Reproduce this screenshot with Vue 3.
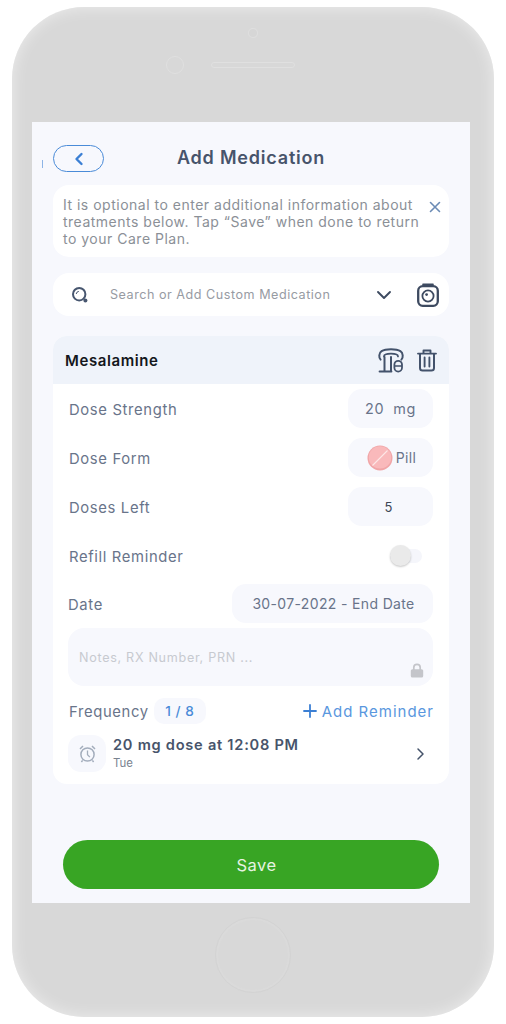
<template>
  <div class="page">
    <div class="phone">
      <div class="bezel-top">
        <span class="sensor"></span>
        <div class="ear-row">
          <span class="camera"></span>
          <span class="speaker"></span>
        </div>
      </div>

      <main class="screen">
        <span class="edge-mark"></span>
        <header class="nav">
          <button class="back" type="button">
            <svg width="12" height="14" viewBox="0 0 12 14"><path d="M8.5 2 3.5 7l5 5" fill="none" stroke="#3b7fd4" stroke-width="2.4" stroke-linecap="round" stroke-linejoin="round" /></svg>
          </button>
          <h1>Add Medication</h1>
        </header>

        <section class="info card">
          <p>It is optional to enter additional information about treatments below. Tap “Save” when done to return to your Care Plan.</p>
          <svg class="close" width="12" height="12" viewBox="0 0 12 12"><path d="M1.5 1.5l9 9M10.5 1.5l-9 9" stroke="#6b8bb5" stroke-width="1.6" stroke-linecap="round" /></svg>
        </section>

        <section class="search card">
          <svg class="search-icon" width="18" height="18" viewBox="0 0 18 18">
            <circle cx="8.2" cy="8.2" r="6.2" fill="none" stroke="#47566f" stroke-width="2" />
            <path d="M5.2 8a3 3 0 0 1 2.6-2.6" fill="none" stroke="#47566f" stroke-width="1" />
            <circle cx="14.4" cy="14.4" r="2" fill="#47566f" />
          </svg>
          <span class="search-text">Search or Add Custom Medication</span>
          <svg class="chev-down" width="16" height="10" viewBox="0 0 16 10"><path d="M2 2l6 6 6-6" fill="none" stroke="#3d4a60" stroke-width="1.9" stroke-linecap="round" stroke-linejoin="round" /></svg>
          <svg width="22" height="24" viewBox="0 0 22 24">
            <rect x="1.2" y="3.2" width="19.6" height="19.6" rx="4.5" fill="none" stroke="#3d4a60" stroke-width="2.3" />
            <path d="M6 1.4h10" stroke="#3d4a60" stroke-width="1.6" stroke-linecap="round" />
            <circle cx="11" cy="13" r="5.6" fill="none" stroke="#3d4a60" stroke-width="1.8" />
            <circle cx="9.6" cy="11.6" r="1.4" fill="#3d4a60" />
          </svg>
        </section>

        <section class="med card">
          <div class="med-head">
            <strong>Mesalamine</strong>
            <svg width="26" height="25" viewBox="0 0 26 25">
              <path d="M2.6 11.6C.6 9.6.8 5 3.6 3.2 6 1.6 9 1.2 13 1.2s7 .4 9.4 2c2.8 1.8 3 6.4 1 8.4" fill="none" stroke="#43526b" stroke-width="2" stroke-linecap="round" />
              <path d="M6 8.4c0-2 2.4-2.8 7-2.8s7 .8 7 2.8" fill="none" stroke="#43526b" stroke-width="1.8" stroke-linecap="round" />
              <path d="M6.5 9v14M13 9v14M1.6 23.4h11.8" fill="none" stroke="#43526b" stroke-width="2" stroke-linecap="round" />
              <rect x="16.4" y="12.8" width="7.6" height="10.8" rx="3.8" fill="none" stroke="#43526b" stroke-width="1.8" />
              <path d="M16.4 18h7.6" stroke="#43526b" stroke-width="1.6" />
            </svg>
            <svg class="trash" width="20" height="23" viewBox="0 0 20 23">
              <path d="M1 4.6h18M6.5 4V1.5h7V4" fill="none" stroke="#43526b" stroke-width="1.9" stroke-linecap="round" stroke-linejoin="round" />
              <path d="M3 5v14a2.6 2.6 0 0 0 2.6 2.6h8.8A2.6 2.6 0 0 0 17 19V5" fill="none" stroke="#43526b" stroke-width="2" />
              <path d="M7.6 8.5v9M12.4 8.5v9" stroke="#43526b" stroke-width="1.9" stroke-linecap="round" />
            </svg>
          </div>

          <div class="med-body">
            <div class="row">
              <span class="label">Dose Strength</span>
              <span class="pill-box strength">20&nbsp; mg</span>
            </div>
            <div class="row">
              <span class="label">Dose Form</span>
              <span class="pill-box form">
                <svg width="26" height="26" viewBox="0 0 26 26">
                  <circle cx="13" cy="13" r="12.5" fill="#f0a5a7" />
                  <circle cx="13" cy="12.4" r="11.2" fill="#f9b9bb" />
                  <path d="M5.5 20.5 20.5 5.5" stroke="#fde6e6" stroke-width="1.1" />
                </svg>
                Pill
              </span>
            </div>
            <div class="row">
              <span class="label">Doses Left</span>
              <span class="pill-box dark">5</span>
            </div>
            <div class="row refill">
              <span class="label">Refill Reminder</span>
              <span class="toggle"><span class="knob"></span></span>
            </div>
            <div class="row date-row">
              <span class="label">Date</span>
              <span class="pill-box date">30-07-2022 - End Date</span>
            </div>

            <div class="notes">
              <span>Notes, RX Number, PRN ...</span>
              <svg class="lock" width="14" height="15" viewBox="0 0 14 15">
                <path d="M3.8 7V4.6a3.2 3.2 0 0 1 6.4 0V7" fill="none" stroke="#c4c5ca" stroke-width="1.7" />
                <rect x="0.8" y="6.2" width="12.4" height="8.4" rx="1.6" fill="#c4c5ca" />
              </svg>
            </div>

            <div class="freq">
              <span class="label">Frequency</span>
              <span class="badge">1 / 8</span>
              <span class="add">
                <svg width="14" height="14" viewBox="0 0 14 14"><path d="M7 1v12M1 7h12" stroke="#3b7fd4" stroke-width="1.8" stroke-linecap="round" /></svg>
                Add Reminder
              </span>
            </div>

            <div class="reminder">
              <span class="alarm">
                <svg width="17" height="18" viewBox="0 0 17 18">
                  <circle cx="8.5" cy="9.5" r="6.6" fill="none" stroke="#a3adbc" stroke-width="1.5" />
                  <path d="M8.5 5.5v4.2l2.4 2.4" fill="none" stroke="#a3adbc" stroke-width="1.3" />
                  <path d="M1 4l3-3M16 4l-3-3M3.6 15.4 2.4 17M13.4 15.4l1.2 1.6" stroke="#a3adbc" stroke-width="1.5" />
                </svg>
              </span>
              <div class="reminder-text">
                <b>20 mg dose at 12:08 PM</b>
                <small>Tue</small>
              </div>
              <svg width="10" height="14" viewBox="0 0 10 14"><path d="M2 2l5 5-5 5" fill="none" stroke="#45536a" stroke-width="1.5" stroke-linecap="round" stroke-linejoin="round" /></svg>
            </div>
          </div>
        </section>

        <button class="save" type="button">Save</button>
      </main>

      <div class="bezel-bottom">
        <span class="home"></span>
      </div>
    </div>
  </div>
</template>

<script setup>
</script>

<style>
html,
body {
  background: #ffffff;
}
</style>

<style scoped>
.page {
  width: 506px;
  height: 1024px;
  padding: 7px 12px;
  box-sizing: border-box;
  font-family: Inter, "Noto Sans", sans-serif;
  overflow: hidden;
}

.phone {
  width: 482px;
  height: 1010px;
  border-radius: 72px;
  background: #d8d8d8;
  box-shadow: inset 0 0 16px rgba(255, 255, 255, 0.55);
  display: flex;
  flex-direction: column;
}

.bezel-top {
  height: 115px;
  width: 100%;
  flex: none;
  display: flex;
  flex-direction: column;
  align-items: center;
}

.sensor {
  width: 8px;
  height: 8px;
  margin-top: 22px;
  border-radius: 50%;
  background: #d6d6d6;
  box-shadow: 0 0 0 1px #dfdfdf;
}

.ear-row {
  display: flex;
  align-items: center;
  gap: 27px;
  margin-top: 19px;
  margin-left: -46px;
}

.camera {
  width: 18px;
  height: 18px;
  box-sizing: border-box;
  border-radius: 50%;
  border: 1px solid #e0e0e0;
  background: #d8d8d8;
}

.speaker {
  width: 84px;
  height: 6px;
  border-radius: 3px;
  background: #d8d8d8;
  border: 1px solid #e0e0e0;
  box-sizing: border-box;
}

.screen {
  position: relative;
  width: 438px;
  height: 781px;
  margin-left: 20px;
  flex: none;
  box-sizing: border-box;
  background: #f7f8fd;
  padding: 23px 21px 0;
  display: flex;
  flex-direction: column;
}

.edge-mark {
  position: absolute;
  left: 10px;
  top: 38px;
  width: 1px;
  height: 8px;
  background: #8db4e6;
}

.nav {
  position: relative;
  height: 27px;
  display: flex;
  align-items: center;
  justify-content: center;
}

.nav h1 {
  margin: -2px 0 0 0;
  font-size: 18px;
  font-weight: 600;
  color: #47546b;
  letter-spacing: 0.8px;
}

.back {
  position: absolute;
  left: 0;
  top: 0;
  width: 51px;
  height: 27px;
  padding: 0;
  box-sizing: border-box;
  border: 1.5px solid #4a8bd8;
  border-radius: 14px;
  background: transparent;
  display: flex;
  align-items: center;
  justify-content: center;
}

.card {
  background: #ffffff;
  border-radius: 16px;
}

.info {
  margin-top: 13px;
  height: 72px;
  box-sizing: border-box;
  padding: 11px 8px 0 10px;
  display: flex;
  justify-content: space-between;
  align-items: flex-start;
}

.info p {
  margin: 0;
  width: 362px;
  font-size: 14px;
  line-height: 17px;
  color: #8b9097;
  letter-spacing: 0.5px;
}

.close {
  margin-top: 5px;
}

.search {
  margin-top: 16px;
  height: 43px;
  display: flex;
  align-items: center;
  padding: 0 10px 0 18px;
}

.search-text {
  margin-left: 21px;
  font-size: 12.6px;
  color: #979ba3;
  letter-spacing: 0.52px;
  flex: 1;
}

.chev-down {
  margin-right: 25px;
}

.med {
  margin-top: 20px;
  height: 448px;
  overflow: hidden;
  border-radius: 14px;
}

.med-head {
  height: 48px;
  background: #eff3fa;
  display: flex;
  align-items: center;
  padding: 0 12px;
}

.med-head strong {
  flex: 1;
  font-size: 15px;
  font-weight: 600;
  color: #14171c;
  letter-spacing: 0.6px;
}

.trash {
  margin-left: 13px;
}

.med-body {
  padding: 5px 16px 0 15px;
  display: flex;
  flex-direction: column;
}

.row {
  height: 39px;
  margin-bottom: 10px;
  display: flex;
  align-items: center;
  justify-content: space-between;
  padding-left: 1px;
}

.label {
  padding-top: 2px;
  font-size: 14.8px;
  color: #69748a;
  letter-spacing: 0.65px;
}

.pill-box {
  width: 85px;
  height: 39px;
  border-radius: 14px;
  background: #f7f8fd;
  display: flex;
  align-items: center;
  justify-content: center;
  font-size: 14px;
  color: #69748a;
  letter-spacing: 0.3px;
}

.pill-box.strength {
  font-size: 14.4px;
  letter-spacing: 0.6px;
}

.pill-box.form {
  gap: 3px;
  padding-left: 2px;
  box-sizing: border-box;
}

.pill-box.dark {
  padding-right: 4px;
  box-sizing: border-box;
  color: #3d4656;
  font-size: 13px;
}

.pill-box.date {
  width: 201px;
  padding-left: 2px;
  box-sizing: border-box;
  letter-spacing: 0.35px;
}

.refill {
  margin-bottom: 9px;
  padding-left: 1px;
}

.toggle {
  width: 32px;
  height: 14px;
  margin-right: 11px;
  border-radius: 7px;
  background: #f5f6fb;
  display: flex;
  align-items: center;
}

.knob {
  width: 21px;
  height: 21px;
  border-radius: 50%;
  background: #eaeaea;
  box-shadow: 0 1px 2px rgba(0, 0, 0, 0.22);
}

.date-row {
  margin-bottom: 5px;
  padding-left: 0;
}

.notes {
  height: 58px;
  box-sizing: border-box;
  margin-left: 0;
  padding: 22px 9px 0 11px;
  border-radius: 16px;
  background: #f7f8fd;
  display: flex;
  justify-content: space-between;
  font-size: 12.6px;
  color: #c7cad0;
  letter-spacing: 0.7px;
}

.lock {
  margin-top: 13px;
}

.freq {
  margin-top: 12px;
  height: 26px;
  display: flex;
  align-items: center;
  padding-left: 1px;
}

.freq .label {
  padding-top: 1px;
}

.badge {
  width: 52px;
  height: 26px;
  margin-left: 5px;
  border-radius: 10px;
  background: #f7f8fd;
  display: flex;
  align-items: center;
  justify-content: center;
  font-size: 13.6px;
  font-weight: 500;
  color: #4a8bd8;
  letter-spacing: 0.5px;
}

.add {
  margin-left: auto;
  margin-right: -1px;
  display: flex;
  align-items: center;
  gap: 5px;
  font-size: 15px;
  color: #5a97de;
  letter-spacing: 1px;
}

.reminder {
  margin-top: 11px;
  display: flex;
  align-items: center;
  padding-right: 7px;
}

.alarm {
  width: 38px;
  height: 37px;
  flex: none;
  border-radius: 13px;
  background: #f7f8fd;
  display: flex;
  align-items: center;
  justify-content: center;
}

.reminder-text {
  flex: 1;
  margin-left: 7px;
  display: flex;
  flex-direction: column;
}

.reminder-text b {
  font-size: 14.6px;
  line-height: 19px;
  font-weight: 600;
  color: #47546b;
  letter-spacing: 0.75px;
}

.reminder-text small {
  font-size: 11.4px;
  line-height: 17px;
  color: #79828f;
}

.save {
  width: 376px;
  height: 49px;
  margin: 56px 0 0 10px;
  padding: 0 0 0 11px;
  border: 0;
  border-radius: 25px;
  background: #38a524;
  font-family: inherit;
  font-size: 16.5px;
  color: #e6f3e2;
  letter-spacing: 0.5px;
}

.bezel-bottom {
  flex: 1;
  width: 100%;
  display: flex;
  justify-content: center;
}

.home {
  width: 76px;
  height: 76px;
  margin-top: 14px;
  box-sizing: border-box;
  border-radius: 50%;
  border: 1px solid #d3d3d3;
  box-shadow: inset 0 0 0 2px #dadada;
}
</style>
